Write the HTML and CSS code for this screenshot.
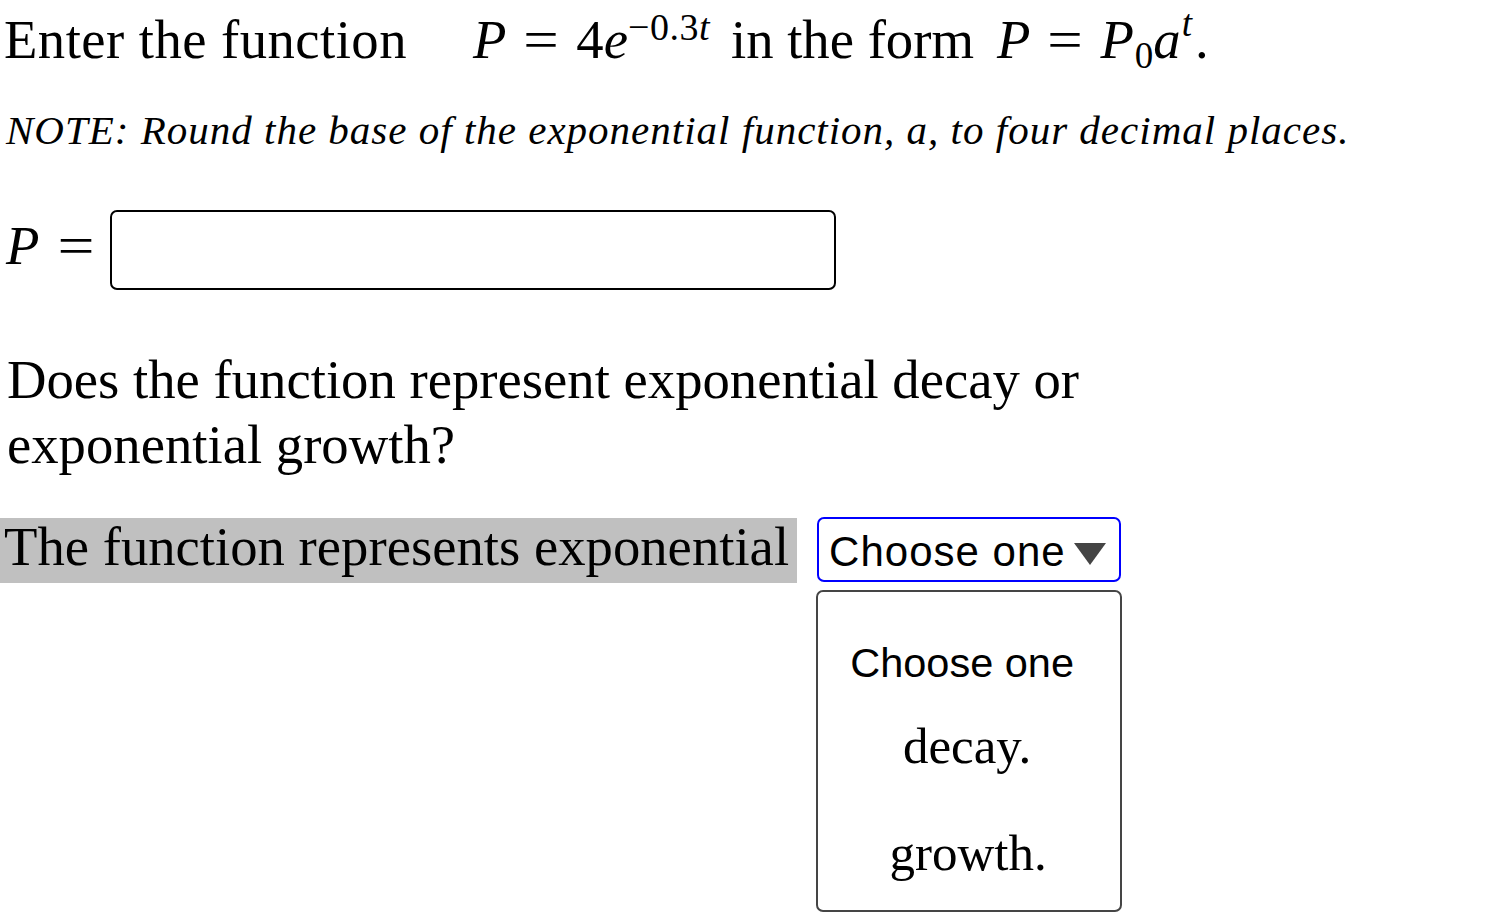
FILE: index.html
```html
<!DOCTYPE html>
<html>
<head>
<meta charset="utf-8">
<title>Exponential function</title>
<link rel="stylesheet" href="styles.css">
</head>
<body>
<div class="page">
  <p class="intro"><span class="lead">Enter the function</span><span class="math first"><i>P</i><span class="eq">=</span>4<i>e</i><sup class="sup">−0.3<i>t</i></sup></span><span class="form">in the form</span><span class="math"><i>P</i><span class="eq">=</span><i>P</i><sub class="sub">0</sub><i>a</i><sup class="sup2"><i>t</i></sup>.</span></p>
  <p class="note">NOTE: Round the base of the exponential function, a, to four decimal places.</p>
  <div class="answer">
    <span class="label"><i>P</i><span class="eq">=</span></span>
    <div class="field"></div>
  </div>
  <p class="question">Does the function represent exponential decay or exponential growth?</p>
  <div class="choice">
    <span class="stem">The function represents exponential</span>
    <div class="select-wrap">
      <div class="select"><span class="select-text">Choose one</span><span class="caret"></span></div>
      <ul class="menu">
        <li class="opt opt-first">Choose one</li>
        <li class="opt opt-decay">decay.</li>
        <li class="opt opt-growth">growth.</li>
      </ul>
    </div>
  </div>
</div>
</body>
</html>
```
FILE: styles.css
```css
html, body {
  margin: 0;
  padding: 0;
  background: #ffffff;
}
body {
  font-family: "Liberation Serif", "Times New Roman", serif;
  color: #000;
  width: 1488px;
  height: 918px;
  overflow: hidden;
}
.page {
  padding: 0;
}
p {
  margin: 0;
}
i {
  font-style: italic;
}
.intro {
  font-size: 54.7px;
  line-height: 64px;
  padding-top: 7.5px;
  padding-left: 4px;
  white-space: nowrap;
}
.lead {
  letter-spacing: 0.45px;
}
.math.first {
  margin-left: 66px;
}
.eq {
  display: inline-block;
  width: 70px;
  text-align: center;
  transform: scaleX(1.15);
}
.sup {
  font-size: 38px;
  line-height: 0;
  vertical-align: 18px;
  letter-spacing: 0.5px;
}
.sup2 {
  font-size: 37px;
  line-height: 0;
  vertical-align: 22px;
  margin-left: 1px;
  margin-right: 3px;
}
.sub {
  font-size: 37px;
  line-height: 0;
  vertical-align: -10px;
  margin-left: 1px;
}
.form {
  margin: 0 23px 0 21px;
}
.note {
  font-size: 41px;
  font-style: italic;
  letter-spacing: 1px;
  line-height: 50px;
  margin-top: 33px;
  padding-left: 6px;
  white-space: nowrap;
}
.answer {
  display: flex;
  align-items: flex-start;
  margin-top: 55.5px;
  padding-left: 6px;
}
.label {
  font-size: 54.7px;
  line-height: 64px;
  margin-top: 3.5px;
  white-space: nowrap;
}
.label .eq {
  width: 40px;
  margin-left: 17px;
  transform: scaleX(1.2);
}
.field {
  box-sizing: border-box;
  width: 726px;
  height: 80px;
  margin-left: 13.6px;
  border: 2px solid #000;
  border-radius: 7px;
  background: #fff;
}
.question {
  font-size: 54.7px;
  line-height: 65px;
  margin-top: 57px;
  padding-left: 7px;
  width: 1200px;
}
.choice {
  display: flex;
  align-items: flex-start;
  margin-top: 40px;
}
.stem {
  display: block;
  background: #c0c0c0;
  font-size: 54.7px;
  line-height: 58px;
  margin-top: 1px;
  padding: 0 8px 7px 4px;
  white-space: nowrap;
}
.select-wrap {
  position: relative;
  margin-left: 20px;
}
.select {
  box-sizing: border-box;
  display: flex;
  align-items: flex-start;
  width: 304px;
  height: 65px;
  padding: 4px 0 0 10px;
  border: 2px solid #0000ff;
  border-radius: 7px;
  font-family: "Liberation Sans", Arial, sans-serif;
  font-size: 42px;
  letter-spacing: 1px;
  line-height: 57px;
  white-space: nowrap;
}
.caret {
  width: 0;
  height: 0;
  margin-top: 20px;
  margin-left: 8px;
  border-left: 16px solid transparent;
  border-right: 16px solid transparent;
  border-top: 22px solid #444;
}
.menu {
  position: absolute;
  top: 73px;
  left: -1px;
  box-sizing: border-box;
  width: 306px;
  height: 322px;
  margin: 0;
  padding: 41px 0 0 0;
  list-style: none;
  border: 2px solid #454545;
  border-radius: 7px;
  background: #fff;
}
.opt {
  text-align: center;
  line-height: 60px;
  height: 60px;
  white-space: nowrap;
}
.opt-first {
  font-family: "Liberation Sans", Arial, sans-serif;
  font-size: 41.5px;
  padding-right: 14px;
}
.opt-decay {
  font-size: 51px;
  margin-top: 22.5px;
  padding-right: 4px;
}
.opt-growth {
  font-size: 51px;
  margin-top: 47px;
  padding-right: 2px;
}
```
